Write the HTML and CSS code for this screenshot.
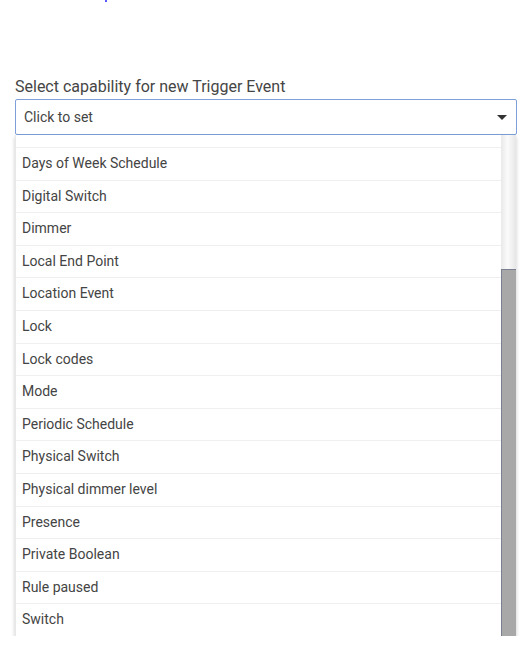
FILE: index.html
```html
<!DOCTYPE html>
<html lang="en">
<head>
    <meta charset="UTF-8">
    <meta name="viewport" content="width=device-width, initial-scale=1.0">
    <title>Select capability</title>
    <link rel="stylesheet" href="styles.css">
</head>
<body>
    <div class="top"><span class="dot"></span></div>

    <main class="field">
        <label class="field-label">Select capability for new Trigger Event</label>
        <div class="select">
            <span>Click to set</span>
            <span class="caret"></span>
        </div>
        <div class="dropdown">
            <ul class="options">
                <li class="partial"></li>
                <li>Days of Week Schedule</li>
                <li>Digital Switch</li>
                <li>Dimmer</li>
                <li>Local End Point</li>
                <li>Location Event</li>
                <li>Lock</li>
                <li>Lock codes</li>
                <li>Mode</li>
                <li>Periodic Schedule</li>
                <li>Physical Switch</li>
                <li>Physical dimmer level</li>
                <li>Presence</li>
                <li>Private Boolean</li>
                <li>Rule paused</li>
                <li>Switch</li>
            </ul>
            <div class="scrollbar">
                <div class="thumb"></div>
            </div>
        </div>
    </main>
</body>
</html>
```

FILE: styles.css
```css
body {
    margin: 0;
    font-family: Roboto, 'Liberation Sans', sans-serif;
    background-color: #fff;
    color: #444;
}
.top {
    height: 77px;
}
.dot {
    display: block;
    width: 2px;
    height: 2px;
    margin-left: 105px;
    background-color: #5a5aff;
}
.field {
    padding: 0 6px 0 15px;
}
.field-label {
    display: block;
    font-size: 16px;
    line-height: 20px;
    color: #454545;
    margin-bottom: 2px;
}
.select {
    height: 34px;
    border: 1px solid #7f9fdb;
    border-radius: 2px;
    display: flex;
    align-items: center;
    justify-content: space-between;
    padding: 0 9px 0 8px;
    font-size: 14px;
    color: #444;
}
.caret {
    width: 0;
    height: 0;
    border-left: 5px solid transparent;
    border-right: 5px solid transparent;
    border-top: 5px solid #333;
}
.dropdown {
    display: flex;
    height: 501px;
    width: 501px;
    background: #fff;
    box-shadow: 0 2px 4px rgba(0, 0, 0, 0.22);
    overflow: hidden;
}
.options {
    list-style: none;
    margin: 0;
    padding: 0;
    flex: 1;
    border-left: 1px solid #e8e8e8;
}
.options li {
    height: 31.6px;
    line-height: 31.6px;
    border-bottom: 1px solid #efefef;
    padding-left: 6px;
    font-size: 14px;
    color: #444;
    white-space: nowrap;
}
.options li.partial {
    height: 12px;
}
.scrollbar {
    width: 15px;
    background: linear-gradient(to right, #e9e9e9, #fbfbfb 45%, #e6e6e6);
    display: flex;
    flex-direction: column;
    justify-content: flex-end;
}
.thumb {
    height: 366px;
    background-color: #a8a8a8;
    border-left: 1px solid #7a8090;
    border-top: 1px solid #7a8090;
}
```
